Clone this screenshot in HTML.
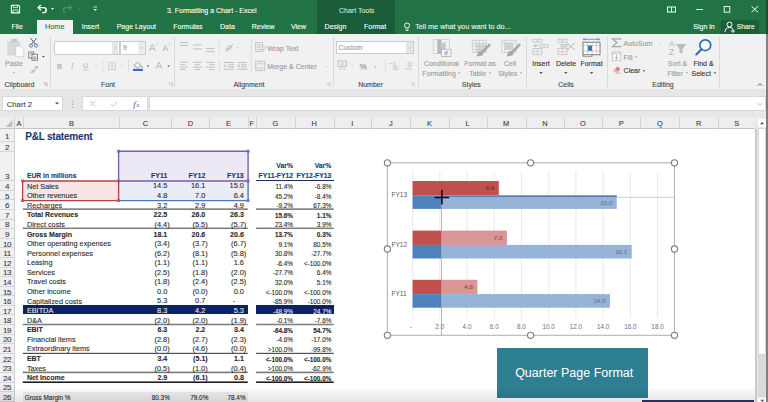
<!DOCTYPE html><html><head><meta charset="utf-8"><style>
html,body{margin:0;padding:0;width:768px;height:402px;overflow:hidden;background:#fff;font-family:"Liberation Sans", sans-serif;}
div{box-sizing:border-box;-webkit-text-stroke:0.1px currentColor;}
svg{position:absolute;overflow:visible;}
</style></head><body>
<div style="position:absolute;left:0px;top:0px;width:768px;height:34px;background:#217346"></div>
<div style="position:absolute;left:317px;top:0px;width:78px;height:34px;background:#1a5c38"></div>
<div style="position:absolute;left:37px;top:19.5px;width:36px;height:15px;background:#f1f1f1"></div>
<div style="position:absolute;left:167.00px;top:6.50px;line-height:8.4px;font-size:7px;color:#fff;font-weight:normal;white-space:nowrap;">3. Formatting a Chart - Excel</div>
<div style="position:absolute;left:339.00px;top:6.50px;line-height:8.4px;font-size:7px;color:#cfe3d6;font-weight:normal;white-space:nowrap;">Chart Tools</div>
<div style="position:absolute;left:11.50px;top:22.90px;line-height:8.4px;font-size:7px;color:#fff;font-weight:normal;white-space:nowrap;">File</div>
<div style="position:absolute;left:81.70px;top:22.90px;line-height:8.4px;font-size:7px;color:#fff;font-weight:normal;white-space:nowrap;">Insert</div>
<div style="position:absolute;left:116.70px;top:22.90px;line-height:8.4px;font-size:7px;color:#fff;font-weight:normal;white-space:nowrap;">Page Layout</div>
<div style="position:absolute;left:173.30px;top:22.90px;line-height:8.4px;font-size:7px;color:#fff;font-weight:normal;white-space:nowrap;">Formulas</div>
<div style="position:absolute;left:220.00px;top:22.90px;line-height:8.4px;font-size:7px;color:#fff;font-weight:normal;white-space:nowrap;">Data</div>
<div style="position:absolute;left:251.70px;top:22.90px;line-height:8.4px;font-size:7px;color:#fff;font-weight:normal;white-space:nowrap;">Review</div>
<div style="position:absolute;left:291.00px;top:22.90px;line-height:8.4px;font-size:7px;color:#fff;font-weight:normal;white-space:nowrap;">View</div>
<div style="position:absolute;left:324.60px;top:22.90px;line-height:8.4px;font-size:7px;color:#fff;font-weight:normal;white-space:nowrap;">Design</div>
<div style="position:absolute;left:364.00px;top:22.90px;line-height:8.4px;font-size:7px;color:#fff;font-weight:normal;white-space:nowrap;">Format</div>
<div style="position:absolute;left:45.00px;top:22.72px;line-height:8.76px;font-size:7.3px;color:#217346;font-weight:normal;white-space:nowrap;">Home</div>
<div style="position:absolute;left:415.20px;top:22.95px;line-height:8.7px;font-size:7.25px;color:#f0f5f1;font-weight:normal;white-space:nowrap;">Tell me what you want to do...</div>
<div style="position:absolute;left:693.30px;top:22.90px;line-height:8.4px;font-size:7px;color:#fff;font-weight:normal;white-space:nowrap;">Sign in</div>
<div style="position:absolute;left:721px;top:20px;width:38px;height:13.5px;background:#1b5e3a"></div>
<div style="position:absolute;left:736.70px;top:23.02px;line-height:8.16px;font-size:6.8px;color:#fff;font-weight:normal;white-space:nowrap;">Share</div>
<svg style="left:0;top:0" width="768" height="34">
<path d="M11.4 5.2 H18.6 L19.6 6.2 V12.9 H11.4 Z" fill="none" stroke="#fff" stroke-width="1.1"/>
<path d="M13.3 5.2 V7.6 H17.4 V5.2" fill="none" stroke="#fff" stroke-width="0.8"/>
<path d="M13 12.9 V10 H18 V12.9" fill="none" stroke="#fff" stroke-width="0.8"/>
<path d="M38.5 7.6 L43.5 7.6 Q46.3 7.6 46.3 10.2 Q46.3 12.6 43.5 12.6 L42 12.6" fill="none" stroke="#fff" stroke-width="1.4"/>
<path d="M40.8 5 L38.2 7.6 L40.8 10.2" fill="none" stroke="#fff" stroke-width="1.4"/>
<path d="M51 8 L54 8 L52.5 10 Z" fill="#fff"/>
<path d="M71 7.6 L66 7.6 Q63.4 7.6 63.4 10.2 Q63.4 12.4 65.5 12.6" fill="none" stroke="#4f9070" stroke-width="1.3"/>
<path d="M68.8 5 L71.4 7.6 L68.8 10.2" fill="none" stroke="#4f9070" stroke-width="1.3"/>
<path d="M78 9 L80 9" stroke="#5e9a78" stroke-width="0.8"/>
<path d="M93.5 7 L97 7" stroke="#fff" stroke-width="0.8"/><path d="M93.5 9 L97 9 L95.25 11 Z" fill="#fff"/>
<rect x="667.5" y="7" width="8" height="5" fill="none" stroke="#fff" stroke-width="1"/><path d="M671.5 7 V12" stroke="#fff" stroke-width="1"/>
<path d="M696.3 9.5 H703" stroke="#fff" stroke-width="1"/>
<rect x="724.2" y="6.6" width="5.6" height="5.6" fill="none" stroke="#fff" stroke-width="0.9"/>
<path d="M751.5 6.3 L758 12.3 M758 6.3 L751.5 12.3" stroke="#fff" stroke-width="1"/>
<circle cx="407" cy="25.5" r="2.5" fill="none" stroke="#fff" stroke-width="0.9"/><path d="M406 28.5 V30.5 H408 V28.5" fill="none" stroke="#fff" stroke-width="0.8"/>
<circle cx="729.5" cy="24.5" r="2.5" fill="none" stroke="#fff" stroke-width="1"/><path d="M725 32 Q725 27.5 729.5 27.5 Q732 27.5 733 29" fill="none" stroke="#fff" stroke-width="1"/><path d="M733 29 V33 M731 31 H735" stroke="#fff" stroke-width="0.9"/>
</svg>
<div style="position:absolute;left:0px;top:34px;width:768px;height:54.6px;background:#f1f1f1"></div>
<div style="position:absolute;left:0px;top:88.6px;width:768px;height:6px;background:#e6e6e6"></div>
<div style="position:absolute;left:50.4px;top:37px;width:1px;height:50px;background:#dadada"></div>
<div style="position:absolute;left:174px;top:37px;width:1px;height:50px;background:#dadada"></div>
<div style="position:absolute;left:333.2px;top:37px;width:1px;height:50px;background:#dadada"></div>
<div style="position:absolute;left:418.3px;top:37px;width:1px;height:50px;background:#dadada"></div>
<div style="position:absolute;left:525.9px;top:37px;width:1px;height:50px;background:#dadada"></div>
<div style="position:absolute;left:607.4px;top:37px;width:1px;height:50px;background:#dadada"></div>
<div style="position:absolute;left:719px;top:37px;width:1px;height:50px;background:#dadada"></div>
<div style="position:absolute;left:-80.50px;width:200px;text-align:center;top:81.00px;line-height:8.4px;font-size:7px;color:#444;font-weight:normal;white-space:nowrap;">Clipboard</div>
<div style="position:absolute;left:8.00px;width:200px;text-align:center;top:81.00px;line-height:8.4px;font-size:7px;color:#444;font-weight:normal;white-space:nowrap;">Font</div>
<div style="position:absolute;left:149.00px;width:200px;text-align:center;top:81.00px;line-height:8.4px;font-size:7px;color:#444;font-weight:normal;white-space:nowrap;">Alignment</div>
<div style="position:absolute;left:270.60px;width:200px;text-align:center;top:81.00px;line-height:8.4px;font-size:7px;color:#444;font-weight:normal;white-space:nowrap;">Number</div>
<div style="position:absolute;left:371.30px;width:200px;text-align:center;top:81.00px;line-height:8.4px;font-size:7px;color:#444;font-weight:normal;white-space:nowrap;">Styles</div>
<div style="position:absolute;left:466.00px;width:200px;text-align:center;top:81.00px;line-height:8.4px;font-size:7px;color:#444;font-weight:normal;white-space:nowrap;">Cells</div>
<div style="position:absolute;left:563.00px;width:200px;text-align:center;top:81.00px;line-height:8.4px;font-size:7px;color:#444;font-weight:normal;white-space:nowrap;">Editing</div>
<div style="position:absolute;left:-86.00px;width:200px;text-align:center;top:59.50px;line-height:8.4px;font-size:7px;color:#9a9a9a;font-weight:normal;white-space:nowrap;">Paste</div>
<div style="position:absolute;left:53.5px;top:41px;width:66px;height:13.5px;background:#fff;border:1px solid #cdcdcd"></div>
<div style="position:absolute;left:111.8px;top:42px;width:6.7px;height:11.5px;background:#e6e6e6"></div>
<div style="position:absolute;left:120.3px;top:41px;width:25.4px;height:13.5px;background:#fff;border:1px solid #cdcdcd"></div>
<div style="position:absolute;left:137.8px;top:42px;width:6.9px;height:11.5px;background:#ececec"></div>
<div style="position:absolute;left:123.00px;top:44.10px;line-height:8.4px;font-size:7px;color:#9a9a9a;font-weight:normal;white-space:nowrap;">9</div>
<div style="position:absolute;left:267.30px;top:44.50px;line-height:8.4px;font-size:7px;color:#9a9a9a;font-weight:normal;white-space:nowrap;">Wrap Text</div>
<div style="position:absolute;left:267.30px;top:62.50px;line-height:8.4px;font-size:7px;color:#9a9a9a;font-weight:normal;white-space:nowrap;">Merge &amp; Center</div>
<div style="position:absolute;left:336px;top:41.2px;width:78.4px;height:13.3px;background:#fff;border:1px solid #cdcdcd"></div>
<div style="position:absolute;left:406.2px;top:42.2px;width:7.2px;height:11.3px;background:#e6e6e6"></div>
<div style="position:absolute;left:338.50px;top:44.10px;line-height:8.4px;font-size:7px;color:#9a9a9a;font-weight:normal;white-space:nowrap;">Custom</div>
<div style="position:absolute;left:263.20px;width:200px;text-align:center;top:62.20px;line-height:9.0px;font-size:7.5px;color:#9a9a9a;font-weight:normal;white-space:nowrap;">%</div>
<div style="position:absolute;left:341.40px;width:200px;text-align:center;top:59.80px;line-height:8.4px;font-size:7px;color:#9a9a9a;font-weight:normal;white-space:nowrap;">Conditional</div>
<div style="position:absolute;left:341.40px;width:200px;text-align:center;top:69.50px;line-height:8.4px;font-size:7px;color:#9a9a9a;font-weight:normal;white-space:nowrap;">Formatting<i style="display:inline-block;width:0;height:0;border-left:1.7px solid transparent;border-right:1.7px solid transparent;border-top:2px solid currentColor;vertical-align:1.3px;margin-left:2.6px;opacity:.85"></i></div>
<div style="position:absolute;left:380.00px;width:200px;text-align:center;top:59.80px;line-height:8.4px;font-size:7px;color:#9a9a9a;font-weight:normal;white-space:nowrap;">Format as</div>
<div style="position:absolute;left:380.00px;width:200px;text-align:center;top:69.50px;line-height:8.4px;font-size:7px;color:#9a9a9a;font-weight:normal;white-space:nowrap;">Table<i style="display:inline-block;width:0;height:0;border-left:1.7px solid transparent;border-right:1.7px solid transparent;border-top:2px solid currentColor;vertical-align:1.3px;margin-left:2.6px;opacity:.85"></i></div>
<div style="position:absolute;left:410.00px;width:200px;text-align:center;top:59.80px;line-height:8.4px;font-size:7px;color:#9a9a9a;font-weight:normal;white-space:nowrap;">Cell</div>
<div style="position:absolute;left:410.00px;width:200px;text-align:center;top:69.50px;line-height:8.4px;font-size:7px;color:#9a9a9a;font-weight:normal;white-space:nowrap;">Styles<i style="display:inline-block;width:0;height:0;border-left:1.7px solid transparent;border-right:1.7px solid transparent;border-top:2px solid currentColor;vertical-align:1.3px;margin-left:2.6px;opacity:.85"></i></div>
<div style="position:absolute;left:441.00px;width:200px;text-align:center;top:59.80px;line-height:8.4px;font-size:7px;color:#333;font-weight:normal;white-space:nowrap;">Insert</div>
<div style="position:absolute;left:466.00px;width:200px;text-align:center;top:59.80px;line-height:8.4px;font-size:7px;color:#333;font-weight:normal;white-space:nowrap;">Delete</div>
<div style="position:absolute;left:491.50px;width:200px;text-align:center;top:59.80px;line-height:8.4px;font-size:7px;color:#333;font-weight:normal;white-space:nowrap;">Format</div>
<div style="position:absolute;left:623.60px;top:39.80px;line-height:8.4px;font-size:7px;color:#9a9a9a;font-weight:normal;white-space:nowrap;">AutoSum</div>
<div style="position:absolute;left:623.60px;top:53.50px;line-height:8.4px;font-size:7px;color:#9a9a9a;font-weight:normal;white-space:nowrap;">Fill<i style="display:inline-block;width:0;height:0;border-left:1.7px solid transparent;border-right:1.7px solid transparent;border-top:2px solid currentColor;vertical-align:1.3px;margin-left:2.6px;opacity:.85"></i></div>
<div style="position:absolute;left:623.60px;top:67.10px;line-height:8.4px;font-size:7px;color:#333;font-weight:normal;white-space:nowrap;">Clear<i style="display:inline-block;width:0;height:0;border-left:1.7px solid transparent;border-right:1.7px solid transparent;border-top:2px solid currentColor;vertical-align:1.3px;margin-left:2.6px;opacity:.85"></i></div>
<div style="position:absolute;left:577.50px;width:200px;text-align:center;top:59.80px;line-height:8.4px;font-size:7px;color:#9a9a9a;font-weight:normal;white-space:nowrap;">Sort &amp;</div>
<div style="position:absolute;left:577.50px;width:200px;text-align:center;top:69.50px;line-height:8.4px;font-size:7px;color:#9a9a9a;font-weight:normal;white-space:nowrap;">Filter<i style="display:inline-block;width:0;height:0;border-left:1.7px solid transparent;border-right:1.7px solid transparent;border-top:2px solid currentColor;vertical-align:1.3px;margin-left:2.6px;opacity:.85"></i></div>
<div style="position:absolute;left:603.50px;width:200px;text-align:center;top:59.80px;line-height:8.4px;font-size:7px;color:#333;font-weight:normal;white-space:nowrap;">Find &amp;</div>
<div style="position:absolute;left:603.50px;width:200px;text-align:center;top:69.50px;line-height:8.4px;font-size:7px;color:#333;font-weight:normal;white-space:nowrap;">Select<i style="display:inline-block;width:0;height:0;border-left:1.7px solid transparent;border-right:1.7px solid transparent;border-top:2px solid currentColor;vertical-align:1.3px;margin-left:2.6px;opacity:.85"></i></div>
<div style="position:absolute;left:0px;top:94.6px;width:768px;height:22.7px;background:#e6e6e6"></div>
<div style="position:absolute;left:2.3px;top:96.4px;width:61.1px;height:14.8px;background:#fff;border:1px solid #d8d8d8"></div>
<div style="position:absolute;left:6.80px;top:100.28px;line-height:9.24px;font-size:7.7px;color:#444;font-weight:normal;white-space:nowrap;">Chart 2</div>
<div style="position:absolute;left:81.5px;top:96.4px;width:66px;height:14.6px;background:#fff;border:1px solid #d8d8d8"></div>
<div style="position:absolute;left:149.4px;top:96.4px;width:617px;height:14.6px;background:#fff;border:1px solid #d8d8d8"></div>
<svg style="left:0;top:0" width="768" height="120">
<rect x="7.2" y="41.2" width="13" height="14.4" rx="0.8" fill="#d9d9d9"/>
<rect x="11.3" y="39" width="6" height="3.2" rx="0.8" fill="#c4c4c4"/>
<path d="M15.6 46.3 H21.6 L23.8 48.5 V56.8 H15.6 Z" fill="#fafafa" stroke="#c8c8c8" stroke-width="0.7"/>
<path d="M12.6 72 L15.2 72 L13.9 73.4 Z" fill="#b4b4b4"/>
<path d="M30.5 38.2 L35.5 44.2 M36.5 38.2 L31.5 44.2" stroke="#4a4a4a" stroke-width="0.9"/>
<circle cx="31" cy="45.5" r="1.6" fill="none" stroke="#3b73b9" stroke-width="0.9"/>
<circle cx="36" cy="45.5" r="1.6" fill="none" stroke="#3b73b9" stroke-width="0.9"/>
<rect x="28.8" y="52" width="5" height="6" fill="#f4f4f4" stroke="#555" stroke-width="0.7"/>
<rect x="32" y="54.2" width="5.5" height="6" fill="#f4f4f4" stroke="#555" stroke-width="0.7"/>
<path d="M30 54 H32.5 M33.2 57 H36.3 M33.2 58.5 H36.3" stroke="#3b73b9" stroke-width="0.7"/>
<path d="M42 56 L44.8 56 L43.4 57.5 Z" fill="#444"/>
<path d="M30 72.5 L34 68.5 L36 70.5 L32 74 Z" fill="#c8c8c8"/>
<path d="M34.5 67.5 L37 65.5 L38.3 67 L36.3 69.5 Z" fill="#bdbdbd"/>
<path d="M43.5 83 H47 V86.5" fill="none" stroke="#999" stroke-width="0.6"/><path d="M44.5 84 L46.5 86" stroke="#999" stroke-width="0.6"/>
<path d="M114.3 47.5 L116.9 47.5 L115.6 49 Z" fill="#c0c0c0"/>
<path d="M140.4 47.5 L143 47.5 L141.7 49 Z" fill="#c0c0c0"/>
<path d="M149.2 51 L152.2 44.4 L155.2 51 M150.3 48.8 H154" fill="none" stroke="#b4b4b4" stroke-width="0.9"/>
<path d="M155.6 44.8 L156.8 43.6 L158 44.8" fill="none" stroke="#b4b4b4" stroke-width="0.6"/>
<path d="M162.8 51 L165.4 45.4 L168 51 M163.7 49 H167" fill="none" stroke="#b4b4b4" stroke-width="0.9"/>
<path d="M168.4 43.6 L169.6 44.8 L170.8 43.6" fill="none" stroke="#b4b4b4" stroke-width="0.6"/>
<text x="57.1" y="68.6" font-size="7.2" font-weight="bold" fill="#b4b4b4" font-family="Liberation Sans">B</text>
<text x="71" y="68.6" font-size="7.2" font-style="italic" fill="#b4b4b4" font-family="Liberation Serif">I</text>
<text x="83" y="68.4" font-size="7.2" fill="#b4b4b4" font-family="Liberation Sans">U</text>
<path d="M83 70 H88.6" stroke="#b4b4b4" stroke-width="0.7"/>
<path d="M95 65.5 L97.4 65.5 L96.2 66.8 Z" fill="#c4c4c4"/>
<path d="M102.9 59.5 V72" stroke="#dadada" stroke-width="0.8"/>
<rect x="108.6" y="62.2" width="7" height="7.2" fill="none" stroke="#c8c8c8" stroke-width="0.7"/><path d="M112.1 62.2 V69.4 M108.6 65.8 H115.6" stroke="#c8c8c8" stroke-width="0.6"/>
<path d="M120.8 65.5 L123.2 65.5 L122 66.8 Z" fill="#c4c4c4"/>
<path d="M128.5 59.5 V72" stroke="#dadada" stroke-width="0.8"/>
<path d="M134 65.5 L137.5 62 L141 65.5 L137.5 68 Z" fill="#f6f6f6" stroke="#888" stroke-width="0.8"/>
<path d="M141.5 66 Q142.8 67.6 141.6 68" fill="none" stroke="#777" stroke-width="0.8"/>
<rect x="133" y="68.8" width="9.9" height="2.2" fill="#3d6cc0"/>
<path d="M146.8 65.5 L149.4 65.5 L148.1 66.9 Z" fill="#444"/>
<path d="M156 68.8 L159 62 L162 68.8 M157 66.5 H161" fill="none" stroke="#b4b4b4" stroke-width="0.9"/>
<path d="M167.3 65.5 L169.9 65.5 L168.6 66.9 Z" fill="#444"/>
<path d="M168.8 83 H172.3 V86.5" fill="none" stroke="#b0b0b0" stroke-width="0.6"/><path d="M169.8 84 L171.8 86" stroke="#b0b0b0" stroke-width="0.6"/>
<path d="M180 42.6 H188" stroke="#b4b4b4" stroke-width="0.8"/><path d="M180 45.4 H188" stroke="#b4b4b4" stroke-width="0.8"/>
<path d="M193 44.9 H201.7" stroke="#b4b4b4" stroke-width="0.8"/><path d="M193 48.9 H201.7" stroke="#b4b4b4" stroke-width="0.8"/>
<path d="M206 48.6 H214.6" stroke="#b4b4b4" stroke-width="0.8"/><path d="M206 51.6 H214.6" stroke="#b4b4b4" stroke-width="0.8"/>
<path d="M219.4 39 V53.5" stroke="#dadada" stroke-width="0.8"/>
<text x="224" y="50" font-size="6.5" fill="#b4b4b4" font-family="Liberation Sans" transform="rotate(-40 228 47)">ab</text>
<path d="M226 51.3 L233.4 44" stroke="#b4b4b4" stroke-width="0.8"/>
<path d="M236.6 47 L238.8 47 L237.7 48.2 Z" fill="#c4c4c4"/>
<path d="M251.4 39 V73" stroke="#dadada" stroke-width="0.8"/>
<rect x="255.8" y="42.6" width="6.5" height="9" fill="none" stroke="#b4b4b4" stroke-width="0.7"/>
<path d="M257 45 H261" stroke="#b4b4b4" stroke-width="0.8"/><path d="M257 47.2 H261" stroke="#b4b4b4" stroke-width="0.8"/><path d="M257 49.4 H261" stroke="#b4b4b4" stroke-width="0.8"/>
<path d="M262.5 46 Q265.5 46 265.5 48 Q265.5 50 262.5 50 M263.5 49 L262.5 50 L263.5 51" fill="none" stroke="#b4b4b4" stroke-width="0.7"/>
<path d="M180 62.3 H188" stroke="#b4b4b4" stroke-width="0.8"/>
<path d="M180 64.7 H185.5" stroke="#b4b4b4" stroke-width="0.8"/>
<path d="M180 67.1 H188" stroke="#b4b4b4" stroke-width="0.8"/>
<path d="M180 69.5 H185.5" stroke="#b4b4b4" stroke-width="0.8"/>
<path d="M193 62.3 H201.7" stroke="#b4b4b4" stroke-width="0.8"/>
<path d="M194.6 64.7 H200.1" stroke="#b4b4b4" stroke-width="0.8"/>
<path d="M193 67.1 H201.7" stroke="#b4b4b4" stroke-width="0.8"/>
<path d="M194.6 69.5 H200.1" stroke="#b4b4b4" stroke-width="0.8"/>
<path d="M206 62.3 H214.6" stroke="#b4b4b4" stroke-width="0.8"/>
<path d="M209.1 64.7 H214.6" stroke="#b4b4b4" stroke-width="0.8"/>
<path d="M206 67.1 H214.6" stroke="#b4b4b4" stroke-width="0.8"/>
<path d="M209.1 69.5 H214.6" stroke="#b4b4b4" stroke-width="0.8"/>
<path d="M219.4 59 V72" stroke="#dadada" stroke-width="0.8"/>
<path d="M224 62.5 H234" stroke="#b4b4b4" stroke-width="0.8"/><path d="M224 69.3 H234" stroke="#b4b4b4" stroke-width="0.8"/><path d="M228 64.8 H234" stroke="#b4b4b4" stroke-width="0.8"/><path d="M228 67 H234" stroke="#b4b4b4" stroke-width="0.8"/>
<path d="M224 65.9 H227 M225.2 64.5 L224 65.9 L225.2 67.3" fill="none" stroke="#b4b4b4" stroke-width="0.7"/>
<path d="M237 62.5 H247" stroke="#b4b4b4" stroke-width="0.8"/><path d="M237 69.3 H247" stroke="#b4b4b4" stroke-width="0.8"/><path d="M241 64.8 H247" stroke="#b4b4b4" stroke-width="0.8"/><path d="M241 67 H247" stroke="#b4b4b4" stroke-width="0.8"/>
<path d="M237 65.9 H240 M238.8 64.5 L240 65.9 L238.8 67.3" fill="none" stroke="#b4b4b4" stroke-width="0.7"/>
<rect x="255.8" y="61.2" width="9" height="9.4" fill="none" stroke="#b4b4b4" stroke-width="0.7"/>
<path d="M255.8 63.8 H264.8 M255.8 68 H264.8 M260.3 61.2 V63.8 M260.3 68 V70.6" stroke="#b4b4b4" stroke-width="0.6"/>
<path d="M325 66 L327.4 66 L326.2 67.2 Z" fill="#c4c4c4"/>
<path d="M326.5 83 H330 V86.5" fill="none" stroke="#b0b0b0" stroke-width="0.6"/><path d="M327.5 84 L329.5 86" stroke="#b0b0b0" stroke-width="0.6"/>
<path d="M408.8 47.5 L411.4 47.5 L410.1 49 Z" fill="#c0c0c0"/>
<rect x="338" y="61" width="8.5" height="5.2" fill="none" stroke="#b4b4b4" stroke-width="0.8"/>
<circle cx="342.2" cy="63.6" r="1.3" fill="none" stroke="#b4b4b4" stroke-width="0.6"/>
<path d="M339 67.8 H346" stroke="#c8c8c8" stroke-width="0.6"/><path d="M339 69.4 H346" stroke="#c8c8c8" stroke-width="0.6"/>
<path d="M351.2 65.8 L353.6 65.8 L352.4 67 Z" fill="#c4c4c4"/>
<text x="359.4" y="69.8" font-size="8.6" fill="#b4b4b4" font-family="Liberation Sans">%</text>
<text x="374.3" y="67.4" font-size="8" font-weight="bold" fill="#b4b4b4" font-family="Liberation Sans">,</text>
<path d="M385.6 59 V72" stroke="#dadada" stroke-width="0.8"/>
<text x="392" y="65.5" font-size="4.6" fill="#b4b4b4" font-family="Liberation Sans">.0</text><text x="392" y="70" font-size="4.6" fill="#b4b4b4" font-family="Liberation Sans">.00</text>
<path d="M390 63.5 H392.5 M391 62.5 L390 63.5 L391 64.5" fill="none" stroke="#b4b4b4" stroke-width="0.5"/>
<text x="406" y="65.5" font-size="4.6" fill="#b4b4b4" font-family="Liberation Sans">.00</text><text x="407.5" y="70" font-size="4.6" fill="#b4b4b4" font-family="Liberation Sans">.0</text>
<path d="M405 68.5 H407.3 M406.3 67.5 L407.3 68.5 L406.3 69.5" fill="none" stroke="#b4b4b4" stroke-width="0.5"/>
<path d="M410.8 83 H414.3 V86.5" fill="none" stroke="#b0b0b0" stroke-width="0.6"/><path d="M411.8 84 L413.8 86" stroke="#b0b0b0" stroke-width="0.6"/>
<rect x="433.2" y="39.4" width="16.4" height="14.2" fill="#f8f8f8" stroke="#c8c8c8" stroke-width="0.7"/>
<rect x="437.3" y="39.4" width="4" height="14.2" fill="#b3b3b3"/><rect x="441.3" y="42.9" width="4" height="7.1" fill="#c4c4c4"/>
<path d="M433.2 42.9 H449.6 M433.2 46.5 H449.6 M433.2 50 H449.6 M437.3 39.4 V53.6 M441.3 39.4 V53.6 M445.4 39.4 V53.6" stroke="#d0d0d0" stroke-width="0.6"/>
<rect x="441.5" y="49.2" width="9.4" height="7.3" fill="#f6f6f6" stroke="#b0b0b0" stroke-width="0.8"/>
<path d="M444.2 52.2 H448.3 M444.2 54 H448.3 M447.3 50.6 L445.3 55.6" stroke="#9a9a9a" stroke-width="0.7"/>
<rect x="472.2" y="40.2" width="14.2" height="12.4" fill="#f4f4f4" stroke="#c0c0c0" stroke-width="0.7"/>
<rect x="475.8" y="43.3" width="10.6" height="9.3" fill="#d9d9d9"/>
<path d="M472.2 43.3 H486.4 M472.2 46.4 H486.4 M472.2 49.5 H486.4 M475.8 40.2 V52.6 M479.4 40.2 V52.6 M483 40.2 V52.6" stroke="#c6c6c6" stroke-width="0.6"/>
<path d="M489.2 43.2 L491 45 L483.8 52.4 L482.6 55.6 L476.4 56.6 L478.6 51.6 L481.6 50.8 Z" fill="#a9a9a9"/>
<rect x="502" y="40.2" width="14.2" height="12.4" fill="#f6f6f6" stroke="#c0c0c0" stroke-width="0.7"/>
<rect x="504.6" y="42.8" width="9" height="7.4" fill="#d2d2d2"/>
<path d="M502 42.8 H516.2 M504.6 40.2 V52.6" stroke="#c8c8c8" stroke-width="0.6"/>
<path d="M519.2 43.2 L521 45 L513.8 52.4 L512.6 55.6 L506.4 56.6 L508.6 51.6 L511.6 50.8 Z" fill="#a9a9a9"/>
<rect x="533" y="39.2" width="4" height="3" fill="none" stroke="#b4b4b4" stroke-width="0.6"/><rect x="538" y="39.2" width="4" height="3" fill="none" stroke="#b4b4b4" stroke-width="0.6"/>
<path d="M534 45.6 H538 M535 44.6 L534 45.6 L535 46.6" fill="none" stroke="#999" stroke-width="0.7"/>
<rect x="540" y="44.3" width="8.5" height="2.8" fill="none" stroke="#b4b4b4" stroke-width="0.6"/><path d="M544.2 44.3 V47.1" stroke="#b4b4b4" stroke-width="0.5"/>
<rect x="533" y="48.6" width="9" height="6.2" fill="none" stroke="#b4b4b4" stroke-width="0.6"/><path d="M537.5 48.6 V54.8 M533 51.7 H542" stroke="#b4b4b4" stroke-width="0.5"/>
<path d="M539.3 72 L542.7 72 L541 73.9 Z" fill="#555"/>
<rect x="558" y="39.2" width="4" height="3" fill="none" stroke="#b4b4b4" stroke-width="0.6"/><rect x="563" y="39.2" width="4" height="3" fill="none" stroke="#b4b4b4" stroke-width="0.6"/>
<rect x="561" y="44.3" width="6" height="2.8" fill="#ddd" stroke="#b4b4b4" stroke-width="0.6"/>
<path d="M567 43 L575 50 M575 43 L567 50" stroke="#a8a8a8" stroke-width="0.8"/>
<rect x="558" y="48.6" width="9" height="6.2" fill="none" stroke="#b4b4b4" stroke-width="0.6"/><path d="M562.5 48.6 V54.8 M558 51.7 H567" stroke="#b4b4b4" stroke-width="0.5"/>
<path d="M564.1 72 L567.5 72 L565.8 73.9 Z" fill="#555"/>
<path d="M583.4 38.3 V40.3 M599.3 38.3 V40.3 M584 39.3 H598.7" stroke="#3b73b9" stroke-width="0.7"/>
<path d="M585.6 38.2 L584.2 39.3 L585.6 40.4 M597.1 38.2 L598.5 39.3 L597.1 40.4" fill="none" stroke="#3b73b9" stroke-width="0.6"/>
<rect x="583" y="42.2" width="17" height="12.6" fill="#fff" stroke="#5a5a5a" stroke-width="0.8"/>
<path d="M583 45.4 H600 M583 51 H600 M587.4 42.2 V54.8 M592.2 42.2 V54.8 M596.4 42.2 V54.8" stroke="#9a9a9a" stroke-width="0.5"/>
<rect x="588" y="45.6" width="4" height="5.2" fill="#3b73b9"/>
<path d="M583 54.8 V56.6 H592 V54.8" fill="none" stroke="#6a6a6a" stroke-width="0.6"/>
<path d="M589.9 72 L593.3 72 L591.6 73.9 Z" fill="#555"/>
<path d="M620.6 40 V38.8 H612.5 L616.9 42.7 L612.5 46.6 H620.6 V45.4" fill="none" stroke="#a8a8a8" stroke-width="1.3"/>
<path d="M659.3 42.7 L661.7 42.7 L660.5 44 Z" fill="#c4c4c4"/>
<rect x="612.3" y="52" width="8.5" height="8.8" fill="#fafafa" stroke="#b4b4b4" stroke-width="0.7"/><path d="M612.3 53.6 H620.8" stroke="#b4b4b4" stroke-width="0.6"/>
<path d="M616.5 55 V59 M614.8 57.4 L616.5 59 L618.2 57.4" fill="none" stroke="#999" stroke-width="0.7"/>
<path d="M613 71 L617.5 66.5 L620.5 69 L616.5 73 Z" fill="#e07b86"/><path d="M613 71 L615 69 L618 71.8 L616.5 73 Z" fill="#f0b8be"/><path d="M616.5 73.3 H621" stroke="#888" stroke-width="0.5"/>
<text x="668.8" y="47" font-size="9" fill="#b4b4b4" font-family="Liberation Sans">A</text>
<text x="668.8" y="55.3" font-size="9" fill="#b4b4b4" font-family="Liberation Sans">Z</text>
<path d="M675.5 44 H686.3 L682.5 49 V54 L679.5 52.5 V49 Z" fill="#bdbdbd"/>
<circle cx="705.3" cy="45.2" r="5.4" fill="#fff" stroke="#2f6db5" stroke-width="1.7"/>
<path d="M701.5 49.2 L696.3 54.4" stroke="#2f6db5" stroke-width="2.1" stroke-linecap="round"/>
<path d="M757.8 85.8 L760 83.6 L762.2 85.8" fill="none" stroke="#555" stroke-width="0.9"/>
<path d="M55 102.6 L59 102.6 L57 104.4 Z" fill="#444"/>
<path d="M72.6 100.6 V101.6 M72.6 103.7 V104.7 M72.6 106.8 V107.8" stroke="#888" stroke-width="0.9"/>
<path d="M90 101 L95 106.5 M95 101 L90 106.5" stroke="#bdbdbd" stroke-width="0.8"/>
<path d="M111 104.2 L113 106.5 L117.5 101" fill="none" stroke="#bdbdbd" stroke-width="0.8"/>
<text x="133.3" y="107" font-size="9" font-style="italic" fill="#555" font-family="Liberation Serif">f</text><text x="136.6" y="107.2" font-size="6" font-style="italic" fill="#555" font-family="Liberation Serif">x</text>
<path d="M757.5 102.8 L760 105.2 L762.5 102.8" fill="none" stroke="#aaa" stroke-width="0.7"/>
</svg>
<div style="position:absolute;left:0px;top:117.3px;width:755.5px;height:11.8px;background:#eeeeee;border-bottom:1px solid #c4c4c4"></div>
<div style="position:absolute;left:23.4px;top:117.3px;width:1px;height:11.8px;background:#d4d4d4"></div>
<div style="position:absolute;left:-81.15px;width:200px;text-align:center;top:119.86px;line-height:8.88px;font-size:7.4px;color:#3a3a3a;font-weight:normal;white-space:nowrap;">A</div>
<div style="position:absolute;left:119.3px;top:117.3px;width:1px;height:11.8px;background:#d4d4d4"></div>
<div style="position:absolute;left:-28.65px;width:200px;text-align:center;top:119.86px;line-height:8.88px;font-size:7.4px;color:#3a3a3a;font-weight:normal;white-space:nowrap;">B</div>
<div style="position:absolute;left:171.4px;top:117.3px;width:1px;height:11.8px;background:#d4d4d4"></div>
<div style="position:absolute;left:45.35px;width:200px;text-align:center;top:119.86px;line-height:8.88px;font-size:7.4px;color:#3a3a3a;font-weight:normal;white-space:nowrap;">C</div>
<div style="position:absolute;left:209.3px;top:117.3px;width:1px;height:11.8px;background:#d4d4d4"></div>
<div style="position:absolute;left:90.35px;width:200px;text-align:center;top:119.86px;line-height:8.88px;font-size:7.4px;color:#3a3a3a;font-weight:normal;white-space:nowrap;">D</div>
<div style="position:absolute;left:247.6px;top:117.3px;width:1px;height:11.8px;background:#d4d4d4"></div>
<div style="position:absolute;left:128.45px;width:200px;text-align:center;top:119.86px;line-height:8.88px;font-size:7.4px;color:#3a3a3a;font-weight:normal;white-space:nowrap;">E</div>
<div style="position:absolute;left:256px;top:117.3px;width:1px;height:11.8px;background:#d4d4d4"></div>
<div style="position:absolute;left:151.80px;width:200px;text-align:center;top:119.86px;line-height:8.88px;font-size:7.4px;color:#3a3a3a;font-weight:normal;white-space:nowrap;">F</div>
<div style="position:absolute;left:294.7px;top:117.3px;width:1px;height:11.8px;background:#d4d4d4"></div>
<div style="position:absolute;left:175.35px;width:200px;text-align:center;top:119.86px;line-height:8.88px;font-size:7.4px;color:#3a3a3a;font-weight:normal;white-space:nowrap;">G</div>
<div style="position:absolute;left:333.5px;top:117.3px;width:1px;height:11.8px;background:#d4d4d4"></div>
<div style="position:absolute;left:214.10px;width:200px;text-align:center;top:119.86px;line-height:8.88px;font-size:7.4px;color:#3a3a3a;font-weight:normal;white-space:nowrap;">H</div>
<div style="position:absolute;left:371.3px;top:117.3px;width:1px;height:11.8px;background:#d4d4d4"></div>
<div style="position:absolute;left:252.40px;width:200px;text-align:center;top:119.86px;line-height:8.88px;font-size:7.4px;color:#3a3a3a;font-weight:normal;white-space:nowrap;">I</div>
<div style="position:absolute;left:410.2px;top:117.3px;width:1px;height:11.8px;background:#d4d4d4"></div>
<div style="position:absolute;left:290.75px;width:200px;text-align:center;top:119.86px;line-height:8.88px;font-size:7.4px;color:#3a3a3a;font-weight:normal;white-space:nowrap;">J</div>
<div style="position:absolute;left:448.5px;top:117.3px;width:1px;height:11.8px;background:#d4d4d4"></div>
<div style="position:absolute;left:329.35px;width:200px;text-align:center;top:119.86px;line-height:8.88px;font-size:7.4px;color:#3a3a3a;font-weight:normal;white-space:nowrap;">K</div>
<div style="position:absolute;left:486.7px;top:117.3px;width:1px;height:11.8px;background:#d4d4d4"></div>
<div style="position:absolute;left:367.60px;width:200px;text-align:center;top:119.86px;line-height:8.88px;font-size:7.4px;color:#3a3a3a;font-weight:normal;white-space:nowrap;">L</div>
<div style="position:absolute;left:525.7px;top:117.3px;width:1px;height:11.8px;background:#d4d4d4"></div>
<div style="position:absolute;left:406.20px;width:200px;text-align:center;top:119.86px;line-height:8.88px;font-size:7.4px;color:#3a3a3a;font-weight:normal;white-space:nowrap;">M</div>
<div style="position:absolute;left:563.9px;top:117.3px;width:1px;height:11.8px;background:#d4d4d4"></div>
<div style="position:absolute;left:444.80px;width:200px;text-align:center;top:119.86px;line-height:8.88px;font-size:7.4px;color:#3a3a3a;font-weight:normal;white-space:nowrap;">N</div>
<div style="position:absolute;left:602px;top:117.3px;width:1px;height:11.8px;background:#d4d4d4"></div>
<div style="position:absolute;left:482.95px;width:200px;text-align:center;top:119.86px;line-height:8.88px;font-size:7.4px;color:#3a3a3a;font-weight:normal;white-space:nowrap;">O</div>
<div style="position:absolute;left:640.4px;top:117.3px;width:1px;height:11.8px;background:#d4d4d4"></div>
<div style="position:absolute;left:521.20px;width:200px;text-align:center;top:119.86px;line-height:8.88px;font-size:7.4px;color:#3a3a3a;font-weight:normal;white-space:nowrap;">P</div>
<div style="position:absolute;left:679.2px;top:117.3px;width:1px;height:11.8px;background:#d4d4d4"></div>
<div style="position:absolute;left:559.80px;width:200px;text-align:center;top:119.86px;line-height:8.88px;font-size:7.4px;color:#3a3a3a;font-weight:normal;white-space:nowrap;">Q</div>
<div style="position:absolute;left:717.9px;top:117.3px;width:1px;height:11.8px;background:#d4d4d4"></div>
<div style="position:absolute;left:598.55px;width:200px;text-align:center;top:119.86px;line-height:8.88px;font-size:7.4px;color:#3a3a3a;font-weight:normal;white-space:nowrap;">R</div>
<div style="position:absolute;left:755.5px;top:117.3px;width:1px;height:11.8px;background:#d4d4d4"></div>
<div style="position:absolute;left:636.70px;width:200px;text-align:center;top:119.86px;line-height:8.88px;font-size:7.4px;color:#3a3a3a;font-weight:normal;white-space:nowrap;">S</div>
<div style="position:absolute;left:14.3px;top:117.3px;width:1px;height:285px;background:#d0d0d0"></div>
<div style="position:absolute;left:0px;top:129.1px;width:14.3px;height:273px;background:#f0f0f0"></div>
<div style="position:absolute;left:0px;top:141.3px;width:14.3px;height:0.8px;background:#d6d6d6"></div>
<div style="position:absolute;left:-92.90px;width:200px;text-align:center;top:131.95px;line-height:9.6px;font-size:8.0px;color:#3c3c3c;font-weight:normal;white-space:nowrap;letter-spacing:-0.35px">1</div>
<div style="position:absolute;left:0px;top:151.0px;width:14.3px;height:0.8px;background:#d6d6d6"></div>
<div style="position:absolute;left:-92.90px;width:200px;text-align:center;top:143.15px;line-height:9.6px;font-size:8.0px;color:#3c3c3c;font-weight:normal;white-space:nowrap;letter-spacing:-0.35px">2</div>
<div style="position:absolute;left:0px;top:180.3px;width:14.3px;height:0.8px;background:#d6d6d6"></div>
<div style="position:absolute;left:-92.90px;width:200px;text-align:center;top:172.30px;line-height:9.6px;font-size:8.0px;color:#3c3c3c;font-weight:normal;white-space:nowrap;letter-spacing:-0.35px">3</div>
<div style="position:absolute;left:0px;top:189.88500000000002px;width:14.3px;height:0.8px;background:#d6d6d6"></div>
<div style="position:absolute;left:-92.90px;width:200px;text-align:center;top:182.09px;line-height:9.6px;font-size:8.0px;color:#3c3c3c;font-weight:normal;white-space:nowrap;letter-spacing:-0.35px">4</div>
<div style="position:absolute;left:0px;top:199.47000000000003px;width:14.3px;height:0.8px;background:#d6d6d6"></div>
<div style="position:absolute;left:-92.90px;width:200px;text-align:center;top:191.68px;line-height:9.6px;font-size:8.0px;color:#3c3c3c;font-weight:normal;white-space:nowrap;letter-spacing:-0.35px">5</div>
<div style="position:absolute;left:0px;top:209.05500000000004px;width:14.3px;height:0.8px;background:#d6d6d6"></div>
<div style="position:absolute;left:-92.90px;width:200px;text-align:center;top:201.26px;line-height:9.6px;font-size:8.0px;color:#3c3c3c;font-weight:normal;white-space:nowrap;letter-spacing:-0.35px">6</div>
<div style="position:absolute;left:0px;top:218.64000000000001px;width:14.3px;height:0.8px;background:#d6d6d6"></div>
<div style="position:absolute;left:-92.90px;width:200px;text-align:center;top:210.85px;line-height:9.6px;font-size:8.0px;color:#3c3c3c;font-weight:normal;white-space:nowrap;letter-spacing:-0.35px">7</div>
<div style="position:absolute;left:0px;top:228.22500000000002px;width:14.3px;height:0.8px;background:#d6d6d6"></div>
<div style="position:absolute;left:-92.90px;width:200px;text-align:center;top:220.43px;line-height:9.6px;font-size:8.0px;color:#3c3c3c;font-weight:normal;white-space:nowrap;letter-spacing:-0.35px">8</div>
<div style="position:absolute;left:0px;top:237.81000000000003px;width:14.3px;height:0.8px;background:#d6d6d6"></div>
<div style="position:absolute;left:-92.90px;width:200px;text-align:center;top:230.02px;line-height:9.6px;font-size:8.0px;color:#3c3c3c;font-weight:normal;white-space:nowrap;letter-spacing:-0.35px">9</div>
<div style="position:absolute;left:0px;top:247.395px;width:14.3px;height:0.8px;background:#d6d6d6"></div>
<div style="position:absolute;left:-92.90px;width:200px;text-align:center;top:239.60px;line-height:9.6px;font-size:8.0px;color:#3c3c3c;font-weight:normal;white-space:nowrap;letter-spacing:-0.35px">10</div>
<div style="position:absolute;left:0px;top:256.98px;width:14.3px;height:0.8px;background:#d6d6d6"></div>
<div style="position:absolute;left:-92.90px;width:200px;text-align:center;top:249.19px;line-height:9.6px;font-size:8.0px;color:#3c3c3c;font-weight:normal;white-space:nowrap;letter-spacing:-0.35px">11</div>
<div style="position:absolute;left:0px;top:266.565px;width:14.3px;height:0.8px;background:#d6d6d6"></div>
<div style="position:absolute;left:-92.90px;width:200px;text-align:center;top:258.77px;line-height:9.6px;font-size:8.0px;color:#3c3c3c;font-weight:normal;white-space:nowrap;letter-spacing:-0.35px">12</div>
<div style="position:absolute;left:0px;top:276.15000000000003px;width:14.3px;height:0.8px;background:#d6d6d6"></div>
<div style="position:absolute;left:-92.90px;width:200px;text-align:center;top:268.36px;line-height:9.6px;font-size:8.0px;color:#3c3c3c;font-weight:normal;white-space:nowrap;letter-spacing:-0.35px">13</div>
<div style="position:absolute;left:0px;top:285.735px;width:14.3px;height:0.8px;background:#d6d6d6"></div>
<div style="position:absolute;left:-92.90px;width:200px;text-align:center;top:277.94px;line-height:9.6px;font-size:8.0px;color:#3c3c3c;font-weight:normal;white-space:nowrap;letter-spacing:-0.35px">14</div>
<div style="position:absolute;left:0px;top:295.32px;width:14.3px;height:0.8px;background:#d6d6d6"></div>
<div style="position:absolute;left:-92.90px;width:200px;text-align:center;top:287.53px;line-height:9.6px;font-size:8.0px;color:#3c3c3c;font-weight:normal;white-space:nowrap;letter-spacing:-0.35px">15</div>
<div style="position:absolute;left:0px;top:304.90500000000003px;width:14.3px;height:0.8px;background:#d6d6d6"></div>
<div style="position:absolute;left:-92.90px;width:200px;text-align:center;top:297.11px;line-height:9.6px;font-size:8.0px;color:#3c3c3c;font-weight:normal;white-space:nowrap;letter-spacing:-0.35px">16</div>
<div style="position:absolute;left:0px;top:314.49px;width:14.3px;height:0.8px;background:#d6d6d6"></div>
<div style="position:absolute;left:-92.90px;width:200px;text-align:center;top:306.70px;line-height:9.6px;font-size:8.0px;color:#3c3c3c;font-weight:normal;white-space:nowrap;letter-spacing:-0.35px">17</div>
<div style="position:absolute;left:0px;top:324.075px;width:14.3px;height:0.8px;background:#d6d6d6"></div>
<div style="position:absolute;left:-92.90px;width:200px;text-align:center;top:316.28px;line-height:9.6px;font-size:8.0px;color:#3c3c3c;font-weight:normal;white-space:nowrap;letter-spacing:-0.35px">18</div>
<div style="position:absolute;left:0px;top:333.66px;width:14.3px;height:0.8px;background:#d6d6d6"></div>
<div style="position:absolute;left:-92.90px;width:200px;text-align:center;top:325.87px;line-height:9.6px;font-size:8.0px;color:#3c3c3c;font-weight:normal;white-space:nowrap;letter-spacing:-0.35px">19</div>
<div style="position:absolute;left:0px;top:343.245px;width:14.3px;height:0.8px;background:#d6d6d6"></div>
<div style="position:absolute;left:-92.90px;width:200px;text-align:center;top:335.45px;line-height:9.6px;font-size:8.0px;color:#3c3c3c;font-weight:normal;white-space:nowrap;letter-spacing:-0.35px">20</div>
<div style="position:absolute;left:0px;top:352.83px;width:14.3px;height:0.8px;background:#d6d6d6"></div>
<div style="position:absolute;left:-92.90px;width:200px;text-align:center;top:345.04px;line-height:9.6px;font-size:8.0px;color:#3c3c3c;font-weight:normal;white-space:nowrap;letter-spacing:-0.35px">21</div>
<div style="position:absolute;left:0px;top:362.415px;width:14.3px;height:0.8px;background:#d6d6d6"></div>
<div style="position:absolute;left:-92.90px;width:200px;text-align:center;top:354.62px;line-height:9.6px;font-size:8.0px;color:#3c3c3c;font-weight:normal;white-space:nowrap;letter-spacing:-0.35px">22</div>
<div style="position:absolute;left:0px;top:372.0px;width:14.3px;height:0.8px;background:#d6d6d6"></div>
<div style="position:absolute;left:-92.90px;width:200px;text-align:center;top:364.21px;line-height:9.6px;font-size:8.0px;color:#3c3c3c;font-weight:normal;white-space:nowrap;letter-spacing:-0.35px">23</div>
<div style="position:absolute;left:0px;top:381.585px;width:14.3px;height:0.8px;background:#d6d6d6"></div>
<div style="position:absolute;left:-92.90px;width:200px;text-align:center;top:373.79px;line-height:9.6px;font-size:8.0px;color:#3c3c3c;font-weight:normal;white-space:nowrap;letter-spacing:-0.35px">24</div>
<div style="position:absolute;left:0px;top:391.17px;width:14.3px;height:0.8px;background:#d6d6d6"></div>
<div style="position:absolute;left:-92.90px;width:200px;text-align:center;top:383.38px;line-height:9.6px;font-size:8.0px;color:#3c3c3c;font-weight:normal;white-space:nowrap;letter-spacing:-0.35px">25</div>
<div style="position:absolute;left:0px;top:400.755px;width:14.3px;height:0.8px;background:#d6d6d6"></div>
<div style="position:absolute;left:-92.90px;width:200px;text-align:center;top:392.96px;line-height:9.6px;font-size:8.0px;color:#3c3c3c;font-weight:normal;white-space:nowrap;letter-spacing:-0.35px">26</div>
<div id="grid">
<svg style="left:0;top:0" width="768" height="402">
<rect x="118.6" y="151.2" width="129.50" height="29.80" fill="#ece8f5"/>
<rect x="118.6" y="181.0" width="129.50" height="19.60" fill="#e8edf7"/>
<rect x="22.6" y="181.0" width="96.00" height="19.60" fill="#f8e6e6"/>
<path d="M118.6 181.0 V151.2 H248.1 V181.0 H118.6" fill="none" stroke="#7a5ea6" stroke-width="1.35"/>
<path d="M118.6 200.6 H248.1 V181.0" fill="none" stroke="#4677b8" stroke-width="1.35"/>
<path d="M22.6 181.0 H118.6 V200.6 H22.6 Z" fill="none" stroke="#b8403e" stroke-width="1.35"/>
<rect x="117.20" y="149.80" width="2.8" height="2.8" fill="#8064a8"/>
<rect x="246.70" y="149.80" width="2.8" height="2.8" fill="#8064a8"/>
<rect x="246.70" y="179.60" width="2.8" height="2.8" fill="#8064a8"/>
<rect x="117.20" y="179.60" width="2.8" height="2.8" fill="#c0504d"/>
<rect x="21.20" y="179.60" width="2.8" height="2.8" fill="#c0504d"/>
<rect x="21.20" y="199.20" width="2.8" height="2.8" fill="#c0504d"/>
<rect x="117.20" y="199.20" width="2.8" height="2.8" fill="#c0504d"/>
<rect x="246.70" y="199.20" width="2.8" height="2.8" fill="#4f81bd"/>
</svg>
<div style="position:absolute;left:25.20px;top:130.50px;line-height:12.0px;font-size:10px;color:#1c3a70;font-weight:bold;white-space:nowrap;letter-spacing:-0.2px">P&amp;L statement</div>
<div style="position:absolute;left:26.90px;top:172.15px;line-height:8.1px;font-size:6.75px;color:#1c3a70;font-weight:bold;white-space:nowrap;">EUR in millions</div>
<div style="position:absolute;right:600.70px;top:172.00px;line-height:8.4px;font-size:7px;color:#1c3a70;font-weight:bold;white-space:nowrap;">FY11</div>
<div style="position:absolute;right:562.70px;top:172.00px;line-height:8.4px;font-size:7px;color:#1c3a70;font-weight:bold;white-space:nowrap;">FY12</div>
<div style="position:absolute;right:524.30px;top:172.00px;line-height:8.4px;font-size:7px;color:#1c3a70;font-weight:bold;white-space:nowrap;">FY13</div>
<div style="position:absolute;right:475.00px;top:162.32px;line-height:8.16px;font-size:6.8px;color:#1c3a70;font-weight:bold;white-space:nowrap;">Var%</div>
<div style="position:absolute;right:475.00px;top:171.72px;line-height:8.16px;font-size:6.8px;color:#1c3a70;font-weight:bold;white-space:nowrap;">FY11-FY12</div>
<div style="position:absolute;right:436.70px;top:162.32px;line-height:8.16px;font-size:6.8px;color:#1c3a70;font-weight:bold;white-space:nowrap;">Var%</div>
<div style="position:absolute;right:436.70px;top:171.72px;line-height:8.16px;font-size:6.8px;color:#1c3a70;font-weight:bold;white-space:nowrap;">FY12-FY13</div>
<div style="position:absolute;left:256.1px;top:179.6px;width:77.6px;height:1.5px;background:#1f2f55"></div>
<div style="position:absolute;left:22.8px;top:305.40500000000003px;width:225px;height:8.98499999999998px;background:#0b2266"></div>
<div style="position:absolute;left:255.6px;top:305.40500000000003px;width:78.2px;height:8.98499999999998px;background:#0b2266"></div>
<svg style="left:0;top:0" width="768" height="402">
<rect x="22.8" y="208.50" width="225" height="1.2" fill="#505050"/>
<rect x="256.1" y="208.50" width="77.6" height="1.2" fill="#505050"/>
<rect x="22.8" y="227.55" width="225" height="1.5" fill="#7a7a7a"/>
<rect x="256.1" y="227.55" width="77.6" height="1.5" fill="#7a7a7a"/>
<rect x="22.8" y="323.70" width="225" height="1.6" fill="#808080"/>
<rect x="256.1" y="323.70" width="77.6" height="1.6" fill="#808080"/>
<rect x="22.8" y="352.80" width="225" height="1.2" fill="#505050"/>
<rect x="256.1" y="352.80" width="77.6" height="1.2" fill="#505050"/>
<rect x="22.8" y="371.60" width="225" height="1.6" fill="#777777"/>
<rect x="256.1" y="371.60" width="77.6" height="1.6" fill="#777777"/>
<rect x="22.8" y="381.45" width="225" height="1.5" fill="#111111"/>
<rect x="256.1" y="381.45" width="77.6" height="1.5" fill="#111111"/>
</svg>
<div style="position:absolute;left:22.8px;top:392px;width:224.8px;height:10px;background:#eeeeee"></div>
<div style="position:absolute;left:26.90px;top:182.51px;line-height:8.76px;font-size:7.3px;color:#2a2a2a;font-weight:normal;white-space:nowrap;">Net Sales</div>
<div style="position:absolute;right:600.70px;top:182.45px;line-height:8.88px;font-size:7.4px;color:#2a2a2a;font-weight:normal;white-space:nowrap;">14.5</div>
<div style="position:absolute;right:562.70px;top:182.45px;line-height:8.88px;font-size:7.4px;color:#2a2a2a;font-weight:normal;white-space:nowrap;">16.1</div>
<div style="position:absolute;right:524.10px;top:182.45px;line-height:8.88px;font-size:7.4px;color:#2a2a2a;font-weight:normal;white-space:nowrap;">15.0</div>
<div style="position:absolute;right:475.00px;top:183.08px;line-height:7.619999999999999px;font-size:6.35px;color:#2a2a2a;font-weight:normal;white-space:nowrap;">11.4%</div>
<div style="position:absolute;right:436.70px;top:183.08px;line-height:7.619999999999999px;font-size:6.35px;color:#2a2a2a;font-weight:normal;white-space:nowrap;">-6.8%</div>
<div style="position:absolute;left:26.90px;top:192.10px;line-height:8.76px;font-size:7.3px;color:#2a2a2a;font-weight:normal;white-space:nowrap;">Other revenues</div>
<div style="position:absolute;right:600.70px;top:192.04px;line-height:8.88px;font-size:7.4px;color:#2a2a2a;font-weight:normal;white-space:nowrap;">4.8</div>
<div style="position:absolute;right:562.70px;top:192.04px;line-height:8.88px;font-size:7.4px;color:#2a2a2a;font-weight:normal;white-space:nowrap;">7.0</div>
<div style="position:absolute;right:524.10px;top:192.04px;line-height:8.88px;font-size:7.4px;color:#2a2a2a;font-weight:normal;white-space:nowrap;">6.4</div>
<div style="position:absolute;right:475.00px;top:192.67px;line-height:7.619999999999999px;font-size:6.35px;color:#2a2a2a;font-weight:normal;white-space:nowrap;">45.2%</div>
<div style="position:absolute;right:436.70px;top:192.67px;line-height:7.619999999999999px;font-size:6.35px;color:#2a2a2a;font-weight:normal;white-space:nowrap;">-8.4%</div>
<div style="position:absolute;left:26.90px;top:201.68px;line-height:8.76px;font-size:7.3px;color:#2a2a2a;font-weight:normal;white-space:nowrap;">Recharges</div>
<div style="position:absolute;right:600.70px;top:201.62px;line-height:8.88px;font-size:7.4px;color:#2a2a2a;font-weight:normal;white-space:nowrap;">3.2</div>
<div style="position:absolute;right:562.70px;top:201.62px;line-height:8.88px;font-size:7.4px;color:#2a2a2a;font-weight:normal;white-space:nowrap;">2.9</div>
<div style="position:absolute;right:524.10px;top:201.62px;line-height:8.88px;font-size:7.4px;color:#2a2a2a;font-weight:normal;white-space:nowrap;">4.9</div>
<div style="position:absolute;right:475.00px;top:202.25px;line-height:7.619999999999999px;font-size:6.35px;color:#2a2a2a;font-weight:normal;white-space:nowrap;">-9.2%</div>
<div style="position:absolute;right:436.70px;top:202.25px;line-height:7.619999999999999px;font-size:6.35px;color:#2a2a2a;font-weight:normal;white-space:nowrap;">67.3%</div>
<div style="position:absolute;left:26.90px;top:211.45px;line-height:8.4px;font-size:7px;color:#2a2a2a;font-weight:bold;white-space:nowrap;">Total Revenues</div>
<div style="position:absolute;right:600.70px;top:211.39px;line-height:8.52px;font-size:7.1px;color:#2a2a2a;font-weight:bold;white-space:nowrap;">22.5</div>
<div style="position:absolute;right:562.70px;top:211.39px;line-height:8.52px;font-size:7.1px;color:#2a2a2a;font-weight:bold;white-space:nowrap;">26.0</div>
<div style="position:absolute;right:524.10px;top:211.39px;line-height:8.52px;font-size:7.1px;color:#2a2a2a;font-weight:bold;white-space:nowrap;">26.3</div>
<div style="position:absolute;right:475.00px;top:211.84px;line-height:7.619999999999999px;font-size:6.35px;color:#2a2a2a;font-weight:bold;white-space:nowrap;">15.6%</div>
<div style="position:absolute;right:436.70px;top:211.84px;line-height:7.619999999999999px;font-size:6.35px;color:#2a2a2a;font-weight:bold;white-space:nowrap;">1.1%</div>
<div style="position:absolute;left:26.90px;top:220.85px;line-height:8.76px;font-size:7.3px;color:#2a2a2a;font-weight:normal;white-space:nowrap;">Direct costs</div>
<div style="position:absolute;right:598.30px;top:220.79px;line-height:8.88px;font-size:7.4px;color:#2a2a2a;font-weight:normal;white-space:nowrap;">(4.4)</div>
<div style="position:absolute;right:560.30px;top:220.79px;line-height:8.88px;font-size:7.4px;color:#2a2a2a;font-weight:normal;white-space:nowrap;">(5.5)</div>
<div style="position:absolute;right:521.70px;top:220.79px;line-height:8.88px;font-size:7.4px;color:#2a2a2a;font-weight:normal;white-space:nowrap;">(5.7)</div>
<div style="position:absolute;right:475.00px;top:221.42px;line-height:7.619999999999999px;font-size:6.35px;color:#2a2a2a;font-weight:normal;white-space:nowrap;">23.4%</div>
<div style="position:absolute;right:436.70px;top:221.42px;line-height:7.619999999999999px;font-size:6.35px;color:#2a2a2a;font-weight:normal;white-space:nowrap;">3.9%</div>
<div style="position:absolute;left:26.90px;top:230.62px;line-height:8.4px;font-size:7px;color:#2a2a2a;font-weight:bold;white-space:nowrap;">Gross Margin</div>
<div style="position:absolute;right:600.70px;top:230.56px;line-height:8.52px;font-size:7.1px;color:#2a2a2a;font-weight:bold;white-space:nowrap;">18.1</div>
<div style="position:absolute;right:562.70px;top:230.56px;line-height:8.52px;font-size:7.1px;color:#2a2a2a;font-weight:bold;white-space:nowrap;">20.6</div>
<div style="position:absolute;right:524.10px;top:230.56px;line-height:8.52px;font-size:7.1px;color:#2a2a2a;font-weight:bold;white-space:nowrap;">20.6</div>
<div style="position:absolute;right:475.00px;top:231.01px;line-height:7.619999999999999px;font-size:6.35px;color:#2a2a2a;font-weight:bold;white-space:nowrap;">13.7%</div>
<div style="position:absolute;right:436.70px;top:231.01px;line-height:7.619999999999999px;font-size:6.35px;color:#2a2a2a;font-weight:bold;white-space:nowrap;">0.3%</div>
<div style="position:absolute;left:26.90px;top:240.02px;line-height:8.76px;font-size:7.3px;color:#2a2a2a;font-weight:normal;white-space:nowrap;">Other operating expenses</div>
<div style="position:absolute;right:598.30px;top:239.96px;line-height:8.88px;font-size:7.4px;color:#2a2a2a;font-weight:normal;white-space:nowrap;">(3.4)</div>
<div style="position:absolute;right:560.30px;top:239.96px;line-height:8.88px;font-size:7.4px;color:#2a2a2a;font-weight:normal;white-space:nowrap;">(3.7)</div>
<div style="position:absolute;right:521.70px;top:239.96px;line-height:8.88px;font-size:7.4px;color:#2a2a2a;font-weight:normal;white-space:nowrap;">(6.7)</div>
<div style="position:absolute;right:475.00px;top:240.59px;line-height:7.619999999999999px;font-size:6.35px;color:#2a2a2a;font-weight:normal;white-space:nowrap;">9.1%</div>
<div style="position:absolute;right:436.70px;top:240.59px;line-height:7.619999999999999px;font-size:6.35px;color:#2a2a2a;font-weight:normal;white-space:nowrap;">80.5%</div>
<div style="position:absolute;left:26.90px;top:249.61px;line-height:8.76px;font-size:7.3px;color:#2a2a2a;font-weight:normal;white-space:nowrap;">Personnel expenses</div>
<div style="position:absolute;right:598.30px;top:249.55px;line-height:8.88px;font-size:7.4px;color:#2a2a2a;font-weight:normal;white-space:nowrap;">(6.2)</div>
<div style="position:absolute;right:560.30px;top:249.55px;line-height:8.88px;font-size:7.4px;color:#2a2a2a;font-weight:normal;white-space:nowrap;">(8.1)</div>
<div style="position:absolute;right:521.70px;top:249.55px;line-height:8.88px;font-size:7.4px;color:#2a2a2a;font-weight:normal;white-space:nowrap;">(5.8)</div>
<div style="position:absolute;right:475.00px;top:250.18px;line-height:7.619999999999999px;font-size:6.35px;color:#2a2a2a;font-weight:normal;white-space:nowrap;">30.8%</div>
<div style="position:absolute;right:436.70px;top:250.18px;line-height:7.619999999999999px;font-size:6.35px;color:#2a2a2a;font-weight:normal;white-space:nowrap;">-27.7%</div>
<div style="position:absolute;left:26.90px;top:259.19px;line-height:8.76px;font-size:7.3px;color:#2a2a2a;font-weight:normal;white-space:nowrap;">Leasing</div>
<div style="position:absolute;right:598.30px;top:259.13px;line-height:8.88px;font-size:7.4px;color:#2a2a2a;font-weight:normal;white-space:nowrap;">(1.1)</div>
<div style="position:absolute;right:560.30px;top:259.13px;line-height:8.88px;font-size:7.4px;color:#2a2a2a;font-weight:normal;white-space:nowrap;">(1.1)</div>
<div style="position:absolute;right:524.10px;top:259.13px;line-height:8.88px;font-size:7.4px;color:#2a2a2a;font-weight:normal;white-space:nowrap;">1.6</div>
<div style="position:absolute;right:475.00px;top:259.76px;line-height:7.619999999999999px;font-size:6.35px;color:#2a2a2a;font-weight:normal;white-space:nowrap;">-6.4%</div>
<div style="position:absolute;right:436.70px;top:259.76px;line-height:7.619999999999999px;font-size:6.35px;color:#2a2a2a;font-weight:normal;white-space:nowrap;">&lt;-100.0%</div>
<div style="position:absolute;left:26.90px;top:268.78px;line-height:8.76px;font-size:7.3px;color:#2a2a2a;font-weight:normal;white-space:nowrap;">Services</div>
<div style="position:absolute;right:598.30px;top:268.72px;line-height:8.88px;font-size:7.4px;color:#2a2a2a;font-weight:normal;white-space:nowrap;">(2.5)</div>
<div style="position:absolute;right:560.30px;top:268.72px;line-height:8.88px;font-size:7.4px;color:#2a2a2a;font-weight:normal;white-space:nowrap;">(1.8)</div>
<div style="position:absolute;right:521.70px;top:268.72px;line-height:8.88px;font-size:7.4px;color:#2a2a2a;font-weight:normal;white-space:nowrap;">(2.0)</div>
<div style="position:absolute;right:475.00px;top:269.35px;line-height:7.619999999999999px;font-size:6.35px;color:#2a2a2a;font-weight:normal;white-space:nowrap;">-27.7%</div>
<div style="position:absolute;right:436.70px;top:269.35px;line-height:7.619999999999999px;font-size:6.35px;color:#2a2a2a;font-weight:normal;white-space:nowrap;">6.4%</div>
<div style="position:absolute;left:26.90px;top:278.36px;line-height:8.76px;font-size:7.3px;color:#2a2a2a;font-weight:normal;white-space:nowrap;">Travel costs</div>
<div style="position:absolute;right:598.30px;top:278.30px;line-height:8.88px;font-size:7.4px;color:#2a2a2a;font-weight:normal;white-space:nowrap;">(1.8)</div>
<div style="position:absolute;right:560.30px;top:278.30px;line-height:8.88px;font-size:7.4px;color:#2a2a2a;font-weight:normal;white-space:nowrap;">(2.4)</div>
<div style="position:absolute;right:521.70px;top:278.30px;line-height:8.88px;font-size:7.4px;color:#2a2a2a;font-weight:normal;white-space:nowrap;">(2.5)</div>
<div style="position:absolute;right:475.00px;top:278.93px;line-height:7.619999999999999px;font-size:6.35px;color:#2a2a2a;font-weight:normal;white-space:nowrap;">32.0%</div>
<div style="position:absolute;right:436.70px;top:278.93px;line-height:7.619999999999999px;font-size:6.35px;color:#2a2a2a;font-weight:normal;white-space:nowrap;">5.1%</div>
<div style="position:absolute;left:26.90px;top:287.95px;line-height:8.76px;font-size:7.3px;color:#2a2a2a;font-weight:normal;white-space:nowrap;">Other income</div>
<div style="position:absolute;right:600.70px;top:287.89px;line-height:8.88px;font-size:7.4px;color:#2a2a2a;font-weight:normal;white-space:nowrap;">0.0</div>
<div style="position:absolute;right:560.30px;top:287.89px;line-height:8.88px;font-size:7.4px;color:#2a2a2a;font-weight:normal;white-space:nowrap;">(0.0)</div>
<div style="position:absolute;right:524.10px;top:287.89px;line-height:8.88px;font-size:7.4px;color:#2a2a2a;font-weight:normal;white-space:nowrap;">0.0</div>
<div style="position:absolute;right:475.00px;top:288.52px;line-height:7.619999999999999px;font-size:6.35px;color:#2a2a2a;font-weight:normal;white-space:nowrap;">&lt;-100.0%</div>
<div style="position:absolute;right:436.70px;top:288.52px;line-height:7.619999999999999px;font-size:6.35px;color:#2a2a2a;font-weight:normal;white-space:nowrap;">&lt;-100.0%</div>
<div style="position:absolute;left:26.90px;top:297.53px;line-height:8.76px;font-size:7.3px;color:#2a2a2a;font-weight:normal;white-space:nowrap;">Capitalized costs</div>
<div style="position:absolute;right:600.70px;top:297.47px;line-height:8.88px;font-size:7.4px;color:#2a2a2a;font-weight:normal;white-space:nowrap;">5.3</div>
<div style="position:absolute;right:562.70px;top:297.47px;line-height:8.88px;font-size:7.4px;color:#2a2a2a;font-weight:normal;white-space:nowrap;">0.7</div>
<div style="position:absolute;right:532.90px;top:297.47px;line-height:8.88px;font-size:7.4px;color:#2a2a2a;font-weight:normal;white-space:nowrap;">-</div>
<div style="position:absolute;right:475.00px;top:298.10px;line-height:7.619999999999999px;font-size:6.35px;color:#2a2a2a;font-weight:normal;white-space:nowrap;">-85.9%</div>
<div style="position:absolute;right:436.70px;top:298.10px;line-height:7.619999999999999px;font-size:6.35px;color:#2a2a2a;font-weight:normal;white-space:nowrap;">-100.0%</div>
<div style="position:absolute;left:26.90px;top:307.12px;line-height:8.76px;font-size:7.3px;color:#e8e8ee;font-weight:normal;white-space:nowrap;">EBITDA</div>
<div style="position:absolute;right:600.70px;top:307.06px;line-height:8.88px;font-size:7.4px;color:#e8e8ee;font-weight:normal;white-space:nowrap;">8.3</div>
<div style="position:absolute;right:562.70px;top:307.06px;line-height:8.88px;font-size:7.4px;color:#e8e8ee;font-weight:normal;white-space:nowrap;">4.2</div>
<div style="position:absolute;right:524.10px;top:307.06px;line-height:8.88px;font-size:7.4px;color:#e8e8ee;font-weight:normal;white-space:nowrap;">5.3</div>
<div style="position:absolute;right:475.00px;top:307.69px;line-height:7.619999999999999px;font-size:6.35px;color:#e8e8ee;font-weight:normal;white-space:nowrap;">-48.9%</div>
<div style="position:absolute;right:436.70px;top:307.69px;line-height:7.619999999999999px;font-size:6.35px;color:#e8e8ee;font-weight:normal;white-space:nowrap;">24.7%</div>
<div style="position:absolute;left:26.90px;top:316.70px;line-height:8.76px;font-size:7.3px;color:#2a2a2a;font-weight:normal;white-space:nowrap;">D&amp;A</div>
<div style="position:absolute;right:598.30px;top:316.64px;line-height:8.88px;font-size:7.4px;color:#2a2a2a;font-weight:normal;white-space:nowrap;">(2.0)</div>
<div style="position:absolute;right:560.30px;top:316.64px;line-height:8.88px;font-size:7.4px;color:#2a2a2a;font-weight:normal;white-space:nowrap;">(2.0)</div>
<div style="position:absolute;right:521.70px;top:316.64px;line-height:8.88px;font-size:7.4px;color:#2a2a2a;font-weight:normal;white-space:nowrap;">(1.9)</div>
<div style="position:absolute;right:475.00px;top:317.27px;line-height:7.619999999999999px;font-size:6.35px;color:#2a2a2a;font-weight:normal;white-space:nowrap;">-0.1%</div>
<div style="position:absolute;right:436.70px;top:317.27px;line-height:7.619999999999999px;font-size:6.35px;color:#2a2a2a;font-weight:normal;white-space:nowrap;">-7.6%</div>
<div style="position:absolute;left:26.90px;top:326.47px;line-height:8.4px;font-size:7px;color:#2a2a2a;font-weight:bold;white-space:nowrap;">EBIT</div>
<div style="position:absolute;right:600.70px;top:326.41px;line-height:8.52px;font-size:7.1px;color:#2a2a2a;font-weight:bold;white-space:nowrap;">6.3</div>
<div style="position:absolute;right:562.70px;top:326.41px;line-height:8.52px;font-size:7.1px;color:#2a2a2a;font-weight:bold;white-space:nowrap;">2.2</div>
<div style="position:absolute;right:524.10px;top:326.41px;line-height:8.52px;font-size:7.1px;color:#2a2a2a;font-weight:bold;white-space:nowrap;">3.4</div>
<div style="position:absolute;right:475.00px;top:326.86px;line-height:7.619999999999999px;font-size:6.35px;color:#2a2a2a;font-weight:bold;white-space:nowrap;">-64.8%</div>
<div style="position:absolute;right:436.70px;top:326.86px;line-height:7.619999999999999px;font-size:6.35px;color:#2a2a2a;font-weight:bold;white-space:nowrap;">54.7%</div>
<div style="position:absolute;left:26.90px;top:335.87px;line-height:8.76px;font-size:7.3px;color:#2a2a2a;font-weight:normal;white-space:nowrap;">Financial items</div>
<div style="position:absolute;right:598.30px;top:335.81px;line-height:8.88px;font-size:7.4px;color:#2a2a2a;font-weight:normal;white-space:nowrap;">(2.8)</div>
<div style="position:absolute;right:560.30px;top:335.81px;line-height:8.88px;font-size:7.4px;color:#2a2a2a;font-weight:normal;white-space:nowrap;">(2.7)</div>
<div style="position:absolute;right:521.70px;top:335.81px;line-height:8.88px;font-size:7.4px;color:#2a2a2a;font-weight:normal;white-space:nowrap;">(2.3)</div>
<div style="position:absolute;right:475.00px;top:336.44px;line-height:7.619999999999999px;font-size:6.35px;color:#2a2a2a;font-weight:normal;white-space:nowrap;">-4.6%</div>
<div style="position:absolute;right:436.70px;top:336.44px;line-height:7.619999999999999px;font-size:6.35px;color:#2a2a2a;font-weight:normal;white-space:nowrap;">-17.0%</div>
<div style="position:absolute;left:26.90px;top:345.46px;line-height:8.76px;font-size:7.3px;color:#2a2a2a;font-weight:normal;white-space:nowrap;">Extraordinary items</div>
<div style="position:absolute;right:598.30px;top:345.40px;line-height:8.88px;font-size:7.4px;color:#2a2a2a;font-weight:normal;white-space:nowrap;">(0.0)</div>
<div style="position:absolute;right:560.30px;top:345.40px;line-height:8.88px;font-size:7.4px;color:#2a2a2a;font-weight:normal;white-space:nowrap;">(4.6)</div>
<div style="position:absolute;right:521.70px;top:345.40px;line-height:8.88px;font-size:7.4px;color:#2a2a2a;font-weight:normal;white-space:nowrap;">(0.0)</div>
<div style="position:absolute;right:475.00px;top:346.03px;line-height:7.619999999999999px;font-size:6.35px;color:#2a2a2a;font-weight:normal;white-space:nowrap;">&gt;100.0%</div>
<div style="position:absolute;right:436.70px;top:346.03px;line-height:7.619999999999999px;font-size:6.35px;color:#2a2a2a;font-weight:normal;white-space:nowrap;">-99.8%</div>
<div style="position:absolute;left:26.90px;top:355.22px;line-height:8.4px;font-size:7px;color:#2a2a2a;font-weight:bold;white-space:nowrap;">EBT</div>
<div style="position:absolute;right:600.70px;top:355.16px;line-height:8.52px;font-size:7.1px;color:#2a2a2a;font-weight:bold;white-space:nowrap;">3.4</div>
<div style="position:absolute;right:560.30px;top:355.16px;line-height:8.52px;font-size:7.1px;color:#2a2a2a;font-weight:bold;white-space:nowrap;">(5.1)</div>
<div style="position:absolute;right:524.10px;top:355.16px;line-height:8.52px;font-size:7.1px;color:#2a2a2a;font-weight:bold;white-space:nowrap;">1.1</div>
<div style="position:absolute;right:475.00px;top:355.61px;line-height:7.619999999999999px;font-size:6.35px;color:#2a2a2a;font-weight:bold;white-space:nowrap;">&lt;-100.0%</div>
<div style="position:absolute;right:436.70px;top:355.61px;line-height:7.619999999999999px;font-size:6.35px;color:#2a2a2a;font-weight:bold;white-space:nowrap;">&lt;-100.0%</div>
<div style="position:absolute;left:26.90px;top:364.63px;line-height:8.76px;font-size:7.3px;color:#2a2a2a;font-weight:normal;white-space:nowrap;">Taxes</div>
<div style="position:absolute;right:598.30px;top:364.57px;line-height:8.88px;font-size:7.4px;color:#2a2a2a;font-weight:normal;white-space:nowrap;">(0.5)</div>
<div style="position:absolute;right:560.30px;top:364.57px;line-height:8.88px;font-size:7.4px;color:#2a2a2a;font-weight:normal;white-space:nowrap;">(1.0)</div>
<div style="position:absolute;right:521.70px;top:364.57px;line-height:8.88px;font-size:7.4px;color:#2a2a2a;font-weight:normal;white-space:nowrap;">(0.4)</div>
<div style="position:absolute;right:475.00px;top:365.20px;line-height:7.619999999999999px;font-size:6.35px;color:#2a2a2a;font-weight:normal;white-space:nowrap;">&gt;100.0%</div>
<div style="position:absolute;right:436.70px;top:365.20px;line-height:7.619999999999999px;font-size:6.35px;color:#2a2a2a;font-weight:normal;white-space:nowrap;">-62.9%</div>
<div style="position:absolute;left:26.90px;top:374.39px;line-height:8.4px;font-size:7px;color:#2a2a2a;font-weight:bold;white-space:nowrap;">Net Income</div>
<div style="position:absolute;right:600.70px;top:374.33px;line-height:8.52px;font-size:7.1px;color:#2a2a2a;font-weight:bold;white-space:nowrap;">2.9</div>
<div style="position:absolute;right:560.30px;top:374.33px;line-height:8.52px;font-size:7.1px;color:#2a2a2a;font-weight:bold;white-space:nowrap;">(6.1)</div>
<div style="position:absolute;right:524.10px;top:374.33px;line-height:8.52px;font-size:7.1px;color:#2a2a2a;font-weight:bold;white-space:nowrap;">0.8</div>
<div style="position:absolute;right:475.00px;top:374.78px;line-height:7.619999999999999px;font-size:6.35px;color:#2a2a2a;font-weight:bold;white-space:nowrap;">&lt;-100.0%</div>
<div style="position:absolute;right:436.70px;top:374.78px;line-height:7.619999999999999px;font-size:6.35px;color:#2a2a2a;font-weight:bold;white-space:nowrap;">&lt;-100.0%</div>
<div style="position:absolute;left:24.70px;top:393.92px;line-height:7.68px;font-size:6.4px;color:#2a2a2a;font-weight:normal;white-space:nowrap;">Gross Margin %</div>
<div style="position:absolute;right:598.20px;top:393.92px;line-height:7.68px;font-size:6.4px;color:#2a2a2a;font-weight:normal;white-space:nowrap;">80.3%</div>
<div style="position:absolute;right:559.70px;top:393.92px;line-height:7.68px;font-size:6.4px;color:#2a2a2a;font-weight:normal;white-space:nowrap;">79.0%</div>
<div style="position:absolute;right:522.40px;top:393.92px;line-height:7.68px;font-size:6.4px;color:#2a2a2a;font-weight:normal;white-space:nowrap;">78.4%</div>
</div>
<svg style="left:0;top:0" width="768" height="402">
<line x1="439.82" y1="171" x2="439.82" y2="318" stroke="#e3e3e3" stroke-width="0.8"/>
<line x1="467.04" y1="171" x2="467.04" y2="318" stroke="#e3e3e3" stroke-width="0.8"/>
<line x1="494.26" y1="171" x2="494.26" y2="318" stroke="#e3e3e3" stroke-width="0.8"/>
<line x1="521.48" y1="171" x2="521.48" y2="318" stroke="#e3e3e3" stroke-width="0.8"/>
<line x1="548.70" y1="171" x2="548.70" y2="318" stroke="#e3e3e3" stroke-width="0.8"/>
<line x1="575.92" y1="171" x2="575.92" y2="318" stroke="#e3e3e3" stroke-width="0.8"/>
<line x1="603.14" y1="171" x2="603.14" y2="318" stroke="#e3e3e3" stroke-width="0.8"/>
<line x1="630.36" y1="171" x2="630.36" y2="318" stroke="#e3e3e3" stroke-width="0.8"/>
<line x1="657.58" y1="171" x2="657.58" y2="318" stroke="#e3e3e3" stroke-width="0.8"/>
<line x1="412.6" y1="171" x2="412.6" y2="318" stroke="#e3e3e3" stroke-width="0.8"/>
<line x1="441.5" y1="197" x2="441.5" y2="335.3" stroke="#a6a6a6" stroke-width="0.8"/>
<rect x="412.6" y="181" width="86.20" height="14.3" fill="#c0504d"/>
<rect x="412.6" y="195.3" width="28.90" height="13.6" fill="#4f81bd"/>
<rect x="441.5" y="195.3" width="175.25" height="13.6" fill="#95b3d7"/>
<text x="494.30" y="190.4" font-size="6.2" fill="#7a3432" text-anchor="end" stroke="#7a3432" stroke-width="0.2" font-family="Liberation Sans">6.4</text>
<text x="612.25" y="204.5" font-size="6.2" fill="#6c7f9c" stroke="#6c7f9c" stroke-width="0.2" text-anchor="end" font-family="Liberation Sans">15.0</text>
<rect x="412.6" y="230.6" width="28.90" height="14.3" fill="#c0504d"/>
<rect x="441.5" y="230.6" width="65.40" height="14.3" fill="#d99694"/>
<rect x="412.6" y="244.9" width="28.90" height="13.6" fill="#4f81bd"/>
<rect x="441.5" y="244.9" width="190.22" height="13.6" fill="#95b3d7"/>
<text x="502.40" y="240.0" font-size="6.2" fill="#9c5654" text-anchor="end" stroke="#9c5654" stroke-width="0.2" font-family="Liberation Sans">7.0</text>
<text x="627.22" y="254.1" font-size="6.2" fill="#6c7f9c" stroke="#6c7f9c" stroke-width="0.2" text-anchor="end" font-family="Liberation Sans">16.1</text>
<rect x="412.6" y="279.8" width="28.90" height="14.3" fill="#c0504d"/>
<rect x="441.5" y="279.8" width="35.90" height="14.3" fill="#d99694"/>
<rect x="412.6" y="294.1" width="28.90" height="13.6" fill="#4f81bd"/>
<rect x="441.5" y="294.1" width="168.45" height="13.6" fill="#95b3d7"/>
<text x="472.90" y="289.2" font-size="6.2" fill="#9c5654" text-anchor="end" stroke="#9c5654" stroke-width="0.2" font-family="Liberation Sans">4.8</text>
<text x="605.45" y="303.3" font-size="6.2" fill="#6c7f9c" stroke="#6c7f9c" stroke-width="0.2" text-anchor="end" font-family="Liberation Sans">14.5</text>
<rect x="441.5" y="195.6" width="175.25" height="1.2" fill="#4a72a8"/>
<line x1="616.75" y1="197.4" x2="674.5" y2="197.4" stroke="#bdbdbd" stroke-width="0.7"/>
<text x="391.5" y="197.0" font-size="6.5" fill="#595959" font-family="Liberation Sans">FY13</text>
<text x="391.5" y="246.89999999999998" font-size="6.5" fill="#595959" font-family="Liberation Sans">FY12</text>
<text x="391.5" y="296.2" font-size="6.5" fill="#595959" font-family="Liberation Sans">FY11</text>
<text x="411.1" y="328.6" font-size="6.4" fill="#6f6f6f" text-anchor="middle" font-family="Liberation Sans">-</text>
<text x="439.82" y="328.6" font-size="6.4" fill="#6f6f6f" text-anchor="middle" font-family="Liberation Sans">2.0</text>
<text x="467.04" y="328.6" font-size="6.4" fill="#6f6f6f" text-anchor="middle" font-family="Liberation Sans">4.0</text>
<text x="494.26" y="328.6" font-size="6.4" fill="#6f6f6f" text-anchor="middle" font-family="Liberation Sans">6.0</text>
<text x="521.48" y="328.6" font-size="6.4" fill="#6f6f6f" text-anchor="middle" font-family="Liberation Sans">8.0</text>
<text x="548.70" y="328.6" font-size="6.4" fill="#6f6f6f" text-anchor="middle" font-family="Liberation Sans">10.0</text>
<text x="575.92" y="328.6" font-size="6.4" fill="#6f6f6f" text-anchor="middle" font-family="Liberation Sans">12.0</text>
<text x="603.14" y="328.6" font-size="6.4" fill="#6f6f6f" text-anchor="middle" font-family="Liberation Sans">14.0</text>
<text x="630.36" y="328.6" font-size="6.4" fill="#6f6f6f" text-anchor="middle" font-family="Liberation Sans">16.0</text>
<text x="657.58" y="328.6" font-size="6.4" fill="#6f6f6f" text-anchor="middle" font-family="Liberation Sans">18.0</text>
<rect x="387.4" y="162.8" width="287.1" height="172.5" fill="none" stroke="#b4b4b4" stroke-width="1.1"/>
<circle cx="387.4" cy="162.8" r="3.1" fill="#fff" stroke="#7c7c7c" stroke-width="1.1"/>
<circle cx="530.6" cy="162.8" r="3.1" fill="#fff" stroke="#7c7c7c" stroke-width="1.1"/>
<circle cx="674.5" cy="162.8" r="3.1" fill="#fff" stroke="#7c7c7c" stroke-width="1.1"/>
<circle cx="387.4" cy="249" r="3.1" fill="#fff" stroke="#7c7c7c" stroke-width="1.1"/>
<circle cx="674.5" cy="249" r="3.1" fill="#fff" stroke="#7c7c7c" stroke-width="1.1"/>
<circle cx="387.4" cy="335.3" r="3.1" fill="#fff" stroke="#7c7c7c" stroke-width="1.1"/>
<circle cx="530.6" cy="335.3" r="3.1" fill="#fff" stroke="#7c7c7c" stroke-width="1.1"/>
<circle cx="674.5" cy="335.3" r="3.1" fill="#fff" stroke="#7c7c7c" stroke-width="1.1"/>
<path d="M434.7 197.5 H449.2 M441.9 190 V204.5" stroke="#111" stroke-width="1.6"/>
</svg>
<div style="position:absolute;left:496.9px;top:348.4px;width:150.9px;height:49.9px;background:#2f7f92"></div>
<div style="position:absolute;left:474.20px;width:200px;text-align:center;top:366.20px;line-height:15.0px;font-size:12.5px;color:#fff;font-weight:normal;white-space:nowrap;-webkit-text-stroke:0">Quarter Page Format</div>
<div style="position:absolute;left:641.7px;top:400.3px;width:112.5px;height:1.7px;background:#24386a"></div>
<div style="position:absolute;left:0px;top:386px;width:768px;height:16px;background:linear-gradient(to bottom, rgba(0,0,0,0), rgba(0,0,0,0.1))"></div>
<div style="position:absolute;left:755.3px;top:111.2px;width:12.7px;height:291px;background:#e9e9e9"></div>
<div style="position:absolute;left:755.3px;top:128.5px;width:1.6px;height:274px;background:#c9c9c9"></div>
<div style="position:absolute;left:757.8px;top:118.7px;width:8.2px;height:8.2px;background:#fff"></div>
<div style="position:absolute;left:757.8px;top:128px;width:8.2px;height:226.5px;background:#fff;border:1px solid #d6d6d6"></div>
<div style="position:absolute;left:757.8px;top:354.5px;width:8.2px;height:48px;background:#dadada"></div>
<div style="position:absolute;left:766.3px;top:0px;width:1.7px;height:402px;background:rgba(40,40,40,0.55)"></div>
<svg style="left:0;top:0" width="768" height="402"><path d="M760 124.2 L762 122 L764 124.2 Z" fill="#444"/><path d="M12.4 120 V127 H5.6 Z" fill="#c3c3c3"/><rect x="757.8" y="397.5" width="8.2" height="5" fill="#fafafa"/><path d="M760.3 399.8 L764.3 399.8 L762.3 402 Z" fill="#555"/><rect x="766.3" y="347" width="1.7" height="3" fill="#5a8ad0"/><rect x="766.3" y="378" width="1.7" height="3" fill="#5a8ad0"/></svg>
</body></html>
